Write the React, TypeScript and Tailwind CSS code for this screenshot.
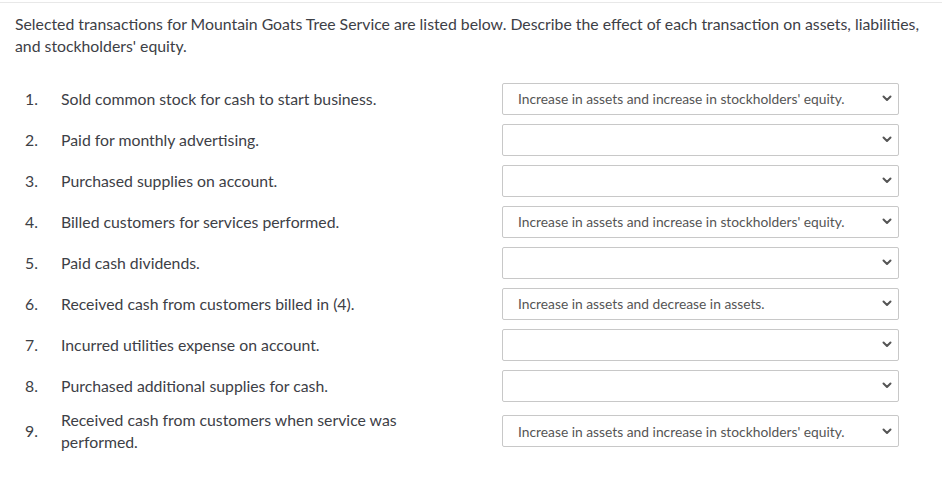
import React from "react";

const rows: { n: string; text: React.ReactNode; value: string; extra?: string }[] = [
  { n: "1.", text: "Sold common stock for cash to start business.", value: "Increase in assets and increase in stockholders' equity." },
  { n: "2.", text: "Paid for monthly advertising.", value: "" },
  { n: "3.", text: "Purchased supplies on account.", value: "" },
  { n: "4.", text: "Billed customers for services performed.", value: "Increase in assets and increase in stockholders' equity." },
  { n: "5.", text: "Paid cash dividends.", value: "" },
  { n: "6.", text: "Received cash from customers billed in (4).", value: "Increase in assets and decrease in assets." },
  { n: "7.", text: "Incurred utilities expense on account.", value: "" },
  { n: "8.", text: "Purchased additional supplies for cash.", value: "" },
  {
    n: "9.",
    text: (
      <>
        Received cash from customers when service was
        <br />
        performed.
      </>
    ),
    value: "Increase in assets and increase in stockholders' equity.",
    extra: "pt-[3px]",
  },
];

function Chevron() {
  return (
    <svg width="10" height="7" viewBox="0 0 10 7" className="shrink-0">
      <path d="M1.5 1.5 L5 5 L8.5 1.5" fill="none" stroke="#555" strokeWidth="2" strokeLinecap="round" strokeLinejoin="round" />
    </svg>
  );
}

export default function App() {
  return (
    <div className="w-[942px] h-[478px] bg-white overflow-hidden" style={{ fontFamily: "Lato, 'Noto Sans', sans-serif" }}>
      <div className="mt-[2px] border-t border-[#e8e8e8]" />
      <p className="pl-[15px] pr-[10px] pt-[10px] text-[15.8px] leading-[22px] text-[#3d4046] whitespace-nowrap">
        Selected transactions for Mountain Goats Tree Service are listed below. Describe the effect of each transaction on assets, liabilities,
        <br />
        and stockholders' equity.
      </p>
      <div className="mt-[21px] flex flex-col">
        {rows.map((r) => (
          <div key={r.n} className={`flex items-center min-h-[41px] ${r.extra ?? ""}`}>
            <div className="flex items-center w-[502px] text-[15.8px] leading-[22px] text-[#3d4046]">
              <span className="w-[36px] pl-[25px] box-content shrink-0">{r.n}</span>
              <span className="whitespace-nowrap">{r.text}</span>
            </div>
            <div className="w-[397px] h-[32px] border border-[#c8c8c8] rounded-[2px] flex items-center justify-between pl-[15px] pr-[6px] text-[13.8px] text-[#555]">
              <span className="whitespace-nowrap pt-[2px]">{r.value}</span>
              <Chevron />
            </div>
          </div>
        ))}
      </div>
    </div>
  );
}
